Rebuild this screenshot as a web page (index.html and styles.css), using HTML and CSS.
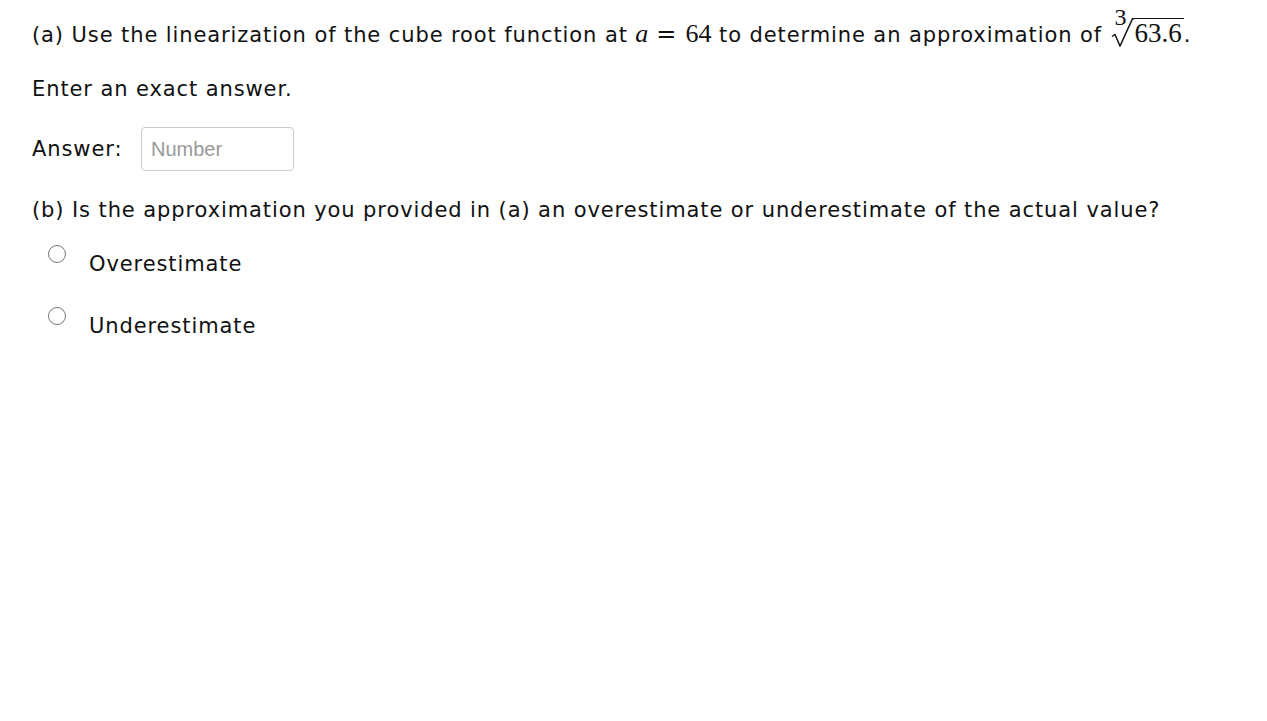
FILE: index.html
```html
<!DOCTYPE html>
<html>
<head>
<meta charset="utf-8">
<link rel="stylesheet" href="styles.css">
</head>
<body>
<div class="page">
  <p class="q q-a">(a) Use the linearization of the cube root function at <span class="math"><i class="mi">a</i><span class="mo">=</span>64</span> to determine an approximation of <span class="math root"><span class="index">3</span><svg class="surd" width="23" height="29" viewBox="0 0 23 29"><path d="M1 18.5 L4 16.5 L9 28 L21.5 0.75 L23 0.75" fill="none" stroke="#111" stroke-width="1.5" stroke-linejoin="miter"/></svg><span class="radicand">63.6</span></span>.</p>
  <p class="note">Enter an exact answer.</p>
  <div class="answer-row">
    <label class="answer-label" for="ans">Answer:</label>
    <input id="ans" class="answer-input" type="text" placeholder="Number">
  </div>
  <p class="q q-b">(b) Is the approximation you provided in (a) an overestimate or underestimate of the actual value?</p>
  <div class="options">
    <label class="option"><span class="radio"></span><span class="opt-text">Overestimate</span></label>
    <label class="option"><span class="radio"></span><span class="opt-text">Underestimate</span></label>
  </div>
</div>
</body>
</html>
```
FILE: styles.css
```css
html, body {
  margin: 0;
  padding: 0;
  background: #fff;
}
body {
  font-family: "DejaVu Sans", Verdana, sans-serif;
  font-size: 21px;
  letter-spacing: 0.9px;
  color: #111;
}
.page {
  padding: 11px 0 0 32px;
}
.q, .note {
  margin: 0;
  line-height: 46px;
}
.note {
  margin-top: 8px;
}
.math {
  font-family: "Liberation Serif", "DejaVu Serif", serif;
  font-size: 26px;
  letter-spacing: 0;
}
.mi {
  font-style: italic;
}
.mo {
  font-family: "DejaVu Sans", sans-serif;
  font-size: 24px;
  margin: 0 9px 0 8px;
}
.root {
  position: relative;
  display: inline-block;
  line-height: 1;
  padding-left: 22px;
  margin-left: 1px;
}
.index {
  position: absolute;
  left: 4px;
  top: -13px;
  font-size: 24px;
}
.surd {
  position: absolute;
  left: 0;
  top: 0;
}
.radicand {
  display: inline-block;
  border-top: 1.5px solid #111;
  padding: 1px 2px 0 2px;
  line-height: 26px;
  font-size: 27px;
}
.answer-row {
  display: flex;
  align-items: center;
  margin-top: 15px;
}
.answer-label {
  width: 109px;
}
.answer-input {
  box-sizing: border-box;
  width: 153px;
  height: 44px;
  border: 1px solid #ccc;
  border-radius: 4px;
  padding: 0 9px;
  font-family: "Liberation Sans", Arial, sans-serif;
  font-size: 20px;
  letter-spacing: 0;
  color: #333;
  outline: none;
  background: #fff;
}
.answer-input::placeholder {
  color: #999;
}
.q-b {
  margin-top: 16px;
}
.options {
  display: flex;
  flex-direction: column;
  gap: 22px;
  margin-top: 10px;
}
.option {
  display: flex;
  align-items: flex-start;
  height: 40px;
}
.radio {
  box-sizing: border-box;
  width: 18px;
  height: 18px;
  border: 1.5px solid #777;
  border-radius: 50%;
  margin: 2px 0 0 16px;
}
.opt-text {
  margin-left: 23px;
  line-height: 30px;
  margin-top: 6px;
}
```
